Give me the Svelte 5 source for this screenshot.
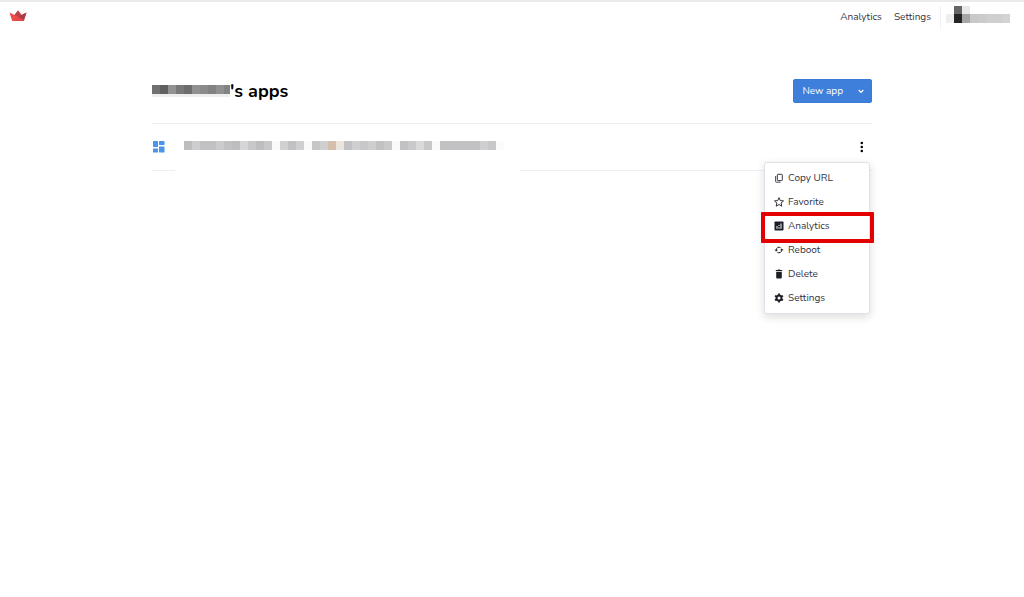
<script lang="ts">
    let menuOpen = true;

    // shades of the masked strings, one per 8px block
    const userTop = ["#ffffff", "#666666", "#e9e9e9"];
    const userBottom = ["#eeeeee", "#242424", "#a6a6a6", "#c9c9c9", "#cbcbcb", "#cfcfd0", "#cfcfd0", "#d3d3d4"];
    const ownerBlocks = ["#707070", "#606060", "#929292", "#787878", "#6d6d6d", "#909090", "#8a8a8a", "#828282", "#909090", "#838383"];
    const appBlocks = [
        "#bdbdbf", "#cdcdcf", "#c1c1c3", "#c1c1c3", "#cbcbcd", "#c1c1c3", "#bdbdbf", "#d6d6d8", "#c8c8ca", "#bdbdbf", "#c8c8ca",
        "#f9f9f9", "#d0d0d2", "#c1c1c3", "#cfcfd1",
        "#f9f9f9", "#c6c6c8", "#cfcfd1", "#d4bfae", "#ece5de", "#c2c2c4", "#cfcfd1", "#c8c8ca", "#cecece", "#c2c2c4", "#c9c9cb",
        "#fafafa", "#c2c2c4", "#c9c9cb", "#d8dada", "#c8c8ca",
        "#fafafa", "#c2c2c4", "#c2c2c4", "#c2c2c4", "#c2c2c4", "#c2c2c4", "#cfcfd1", "#c8c8ca", "#fbfbfb",
    ];

    const menuItems = ["Copy URL", "Favorite", "Analytics", "Reboot", "Delete", "Settings"];
</script>

<style>
    :global(body) {
        background: #ffffff;
        color: #31333f;
        font-family: Nunito, Lato, "Open Sans", sans-serif;
        font-size: 10px;
    }

    .page {
        min-height: 100vh;
    }

    .topbar {
        display: flex;
        align-items: center;
        height: 30px;
        padding: 0 14px 0 9px;
        border-top: 2px solid #ebebeb;
    }

    .logo {
        display: flex;
        margin-right: auto;
        padding-bottom: 2px;
    }

    a {
        color: inherit;
        text-decoration: none;
    }

    nav {
        display: flex;
        gap: 12px;
        padding-right: 9px;
    }

    .user {
        padding: 0 0 6px 5px;
        border-left: 1px solid #f0f1f5;
    }

    .blocks {
        display: flex;
    }

    .blocks span {
        width: 8px;
        height: 9px;
    }

    .user .top span {
        height: 8px;
    }

    main {
        max-width: 720px;
        margin: 0 auto;
        padding-top: 47px;
    }

    .heading {
        display: flex;
        align-items: center;
        justify-content: space-between;
        padding-bottom: 20px;
        border-bottom: 1px solid #eeeff2;
    }

    h1 {
        display: flex;
        align-items: center;
        margin: 0;
        color: #000000;
        font-size: 18px;
        font-weight: 700;
        line-height: 23px;
    }

    .owner {
        border-bottom: 3px solid #eeeeee;
    }

    .owner span:last-child {
        width: 6px;
    }

    button {
        padding: 0;
        border: 0;
        background: none;
        color: inherit;
        font: inherit;
        cursor: pointer;
    }

    .new-app {
        display: flex;
        border: 1px solid #3a7bd6;
        border-radius: 2px;
        background: #3d7fdb;
        color: #ffffff;
    }

    .new-app button {
        height: 22px;
        padding: 0 8px;
    }

    .new-app .more {
        display: flex;
        align-items: center;
        padding: 0 6px;
    }

    .app {
        display: flex;
        align-items: center;
        gap: 9px;
        height: 46px;
        border-bottom: 1px solid #eeeff2;
    }

    /* covers the row's border below the masked name */
    .app .name {
        align-self: stretch;
        margin-bottom: -1px;
        padding: 17px 16px 0 9px;
        background: #ffffff;
    }

    .actions {
        position: relative;
        margin-left: auto;
        padding-right: 4px;
    }

    .actions > button {
        display: flex;
    }

    .menu {
        position: absolute;
        top: 21px;
        right: 2px;
        margin: 0;
        padding: 3px 0;
        width: 104px;
        border: 1px solid #dfe1e8;
        border-radius: 3px;
        background: #ffffff;
        box-shadow: 0 3px 10px rgba(0, 0, 0, 0.14);
        list-style: none;
    }

    .menu button {
        display: flex;
        align-items: center;
        gap: 4px;
        width: 100%;
        height: 24px;
        padding: 0 9px;
    }

    .menu svg {
        color: #1c1e28;
    }

    .marked {
        position: relative;
    }

    .marked::after {
        content: "";
        position: absolute;
        inset: -2px -5px -5px -4px;
        border: 4px solid #e20000;
        border-radius: 1px;
        pointer-events: none;
    }
</style>

<div class="page">
    <header class="topbar">
        <a class="logo" href="/" aria-label="Home">
            <svg width="18" height="12" viewBox="0 0 18 12">
                <path d="M0.5 2.5 L5.5 5 L9 0.5 L12.5 5 L17.5 2.5 L15 10.5 Q14.8 11 14.2 11 H3.8 Q3.2 11 3 10.5 Z" fill="#ee4b4b" />
                <path d="M5.5 5 L9 0.5 L12.5 5 L9 7 Z" fill="#b8434a" />
                <path d="M12.5 5 L17.5 2.5 L15 10 L9 7 Z" fill="#a83c46" />
                <path d="M9 7 L15 10.5 L14 11 H5 Z" fill="#e5474a" />
            </svg>
        </a>
        <nav>
            <a href="/analytics">Analytics</a>
            <a href="/settings">Settings</a>
        </nav>
        <div class="user">
            <div class="blocks top">
                {#each userTop as shade}<span style="background: {shade}"></span>{/each}
            </div>
            <div class="blocks">
                {#each userBottom as shade}<span style="background: {shade}"></span>{/each}
            </div>
        </div>
    </header>

    <main>
        <div class="heading">
            <h1>
                <span class="blocks owner">
                    {#each ownerBlocks as shade}<span style="background: {shade}"></span>{/each}
                </span>'s apps
            </h1>
            <div class="new-app">
                <button>New app</button>
                <button class="more" aria-label="More options">
                    <svg width="8" height="8" viewBox="0 0 8 8" fill="none" stroke="currentColor" stroke-width="1.2">
                        <path d="M1.7 3 L4 5.3 L6.3 3" />
                    </svg>
                </button>
            </div>
        </div>

        <div class="app">
            <svg width="14" height="14" viewBox="0 0 14 14" fill="#4a94ea">
                <rect x="1" y="1" width="5" height="6" rx="0.5" />
                <rect x="7" y="1" width="5.5" height="4" rx="0.5" />
                <rect x="1" y="8.5" width="5" height="4" rx="0.5" />
                <rect x="7" y="6.5" width="5.5" height="6" rx="0.5" />
            </svg>
            <div class="blocks name">
                {#each appBlocks as shade}<span style="background: {shade}"></span>{/each}
            </div>
            <div class="actions">
                <button aria-label="App menu" on:click={() => { menuOpen = !menuOpen; }}>
                    <svg width="12" height="12" viewBox="0 0 12 12" fill="#000000">
                        <circle cx="5.8" cy="2" r="1.3" />
                        <circle cx="5.8" cy="6" r="1.3" />
                        <circle cx="5.8" cy="10" r="1.3" />
                    </svg>
                </button>
                {#if menuOpen}
                    <ul class="menu">
                        {#each menuItems as item}
                            <li class:marked={item === "Analytics"}>
                                <button>
                                    <svg width="10" height="10" viewBox="0 0 10 10" fill="none" stroke="currentColor" stroke-width="1">
                                        {#if item === "Copy URL"}
                                            <rect x="3.3" y="1.3" width="5" height="6.3" rx="0.8" stroke-width="0.9" />
                                            <path d="M1.6 3 V8.2 Q1.6 9.2 2.6 9.2 H6.5" stroke-width="0.8" />
                                        {:else if item === "Favorite"}
                                            <path stroke-width="0.9" stroke-linejoin="round" d="M5 0.7 L6.3 3.6 L9.5 3.9 L7.1 6 L7.8 9.2 L5 7.5 L2.2 9.2 L2.9 6 L0.5 3.9 L3.7 3.6 Z" />
                                        {:else if item === "Analytics"}
                                            <rect x="0.5" y="0.5" width="9" height="9" rx="0.8" fill="currentColor" stroke="none" />
                                            <path stroke="#ffffff" d="M3 5 V7.8 M5 6.2 V7.8 M5 4 V5 M7 2.5 V7.8" />
                                        {:else if item === "Reboot"}
                                            <path d="M2.2 5 A2.8 2.8 0 0 1 6.6 2.7 M7.8 5 A2.8 2.8 0 0 1 3.4 7.3" />
                                            <path fill="currentColor" stroke="none" d="M0.4 4.8 H4 L2.2 6.6 Z M9.6 5.2 H6 L7.8 3.4 Z" />
                                        {:else if item === "Delete"}
                                            <path fill="currentColor" stroke="none" d="M1.8 1 H3.6 L4.1 0.5 H5.9 L6.4 1 H8.2 V2.1 H1.8 Z M2.2 2.7 H7.8 V8.6 Q7.8 9.5 6.9 9.5 H3.1 Q2.2 9.5 2.2 8.6 Z" />
                                        {:else}
                                            <circle cx="5" cy="5" r="2.5" stroke-width="2" />
                                            <path stroke-width="1.8" d="M5 0.4 V2 M5 8 V9.6 M1 2.7 L2.4 3.5 M7.6 6.5 L9 7.3 M1 7.3 L2.4 6.5 M7.6 3.5 L9 2.7" />
                                        {/if}
                                    </svg>
                                    {item}
                                </button>
                            </li>
                        {/each}
                    </ul>
                {/if}
            </div>
        </div>
    </main>
</div>
